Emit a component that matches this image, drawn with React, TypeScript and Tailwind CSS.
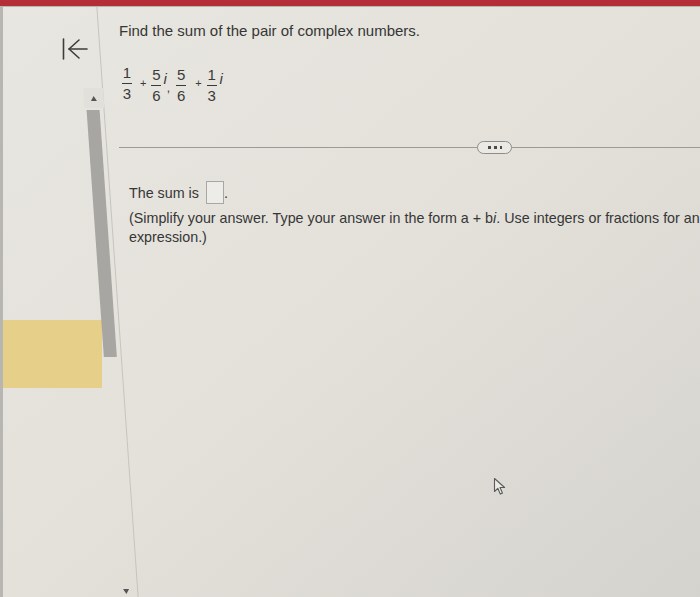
function Frac({ n, d }: { n: string; d: string }) {
  return (
    <span className="inline-flex flex-col items-center text-[15px] leading-[16px]">
      <span>{n}</span>
      <span className="my-[2px] h-px w-[10px] bg-[#3a3a3a]" />
      <span>{d}</span>
    </span>
  );
}

function BackIcon() {
  return (
    <svg width="26" height="22" viewBox="0 0 26 22" fill="none" stroke="#3d3d3d" strokeWidth="1.6" strokeLinecap="round" strokeLinejoin="round">
      <path d="M1.5 1v20" />
      <path d="M17 2l-10 9 10 9" />
      <path d="M7 11h18" />
    </svg>
  );
}

function Cursor() {
  return (
    <svg width="13" height="19" viewBox="0 0 13 19" className="absolute left-[493px] top-[477px]">
      <path d="M1.5 1.5v13l3.3-3.2 2.5 5.8 2.2-1-2.5-5.6h4.6z" fill="#eceae5" stroke="#5a5a5a" strokeWidth="1.1" strokeLinejoin="round" />
    </svg>
  );
}

export default function App() {
  return (
    <div className="relative h-[597px] w-[700px] overflow-hidden bg-gradient-to-br from-[#e8e6e0] via-[#e3e1da] to-[#d5d3cd] font-['Liberation_Sans',Arial,sans-serif] text-[#363636]">
      <div className="h-[6px] bg-[#b32e38]" />
      <div className="h-px bg-[#b9b6b0]" />
      <div className="flex h-[590px]">
        {/* left rail */}
        <aside className="flex w-[94px] flex-col border-l-[3px] border-[#b8b6b0]">
          <div className="ml-[59px] mt-[31px]">
            <BackIcon />
          </div>
          <div className="mt-[260px] h-[68px] w-[99px] bg-[#e6cf88]" />
        </aside>

        {/* scrollbar */}
        <div className="flex w-[24px] skew-x-[4deg] flex-col items-center border-r border-[#c6c4be]">
          <div className="ml-[4px] mt-[81px] flex h-[20px] w-[20px] items-center justify-center bg-[#e2e0db]">
            <span className="block h-0 w-0 border-x-[3px] border-b-[5px] border-x-transparent border-b-[#555]" />
          </div>
          <div className="ml-[6px] mt-[2px] h-[247px] w-[13px] self-start bg-[#a7a6a2]" />
          <div className="flex-1" />
          <span className="mb-[3px] block h-0 w-0 border-x-[3px] border-t-[5px] border-x-transparent border-t-[#555]" />
        </div>

        {/* content */}
        <main className="flex-1 overflow-hidden pl-[1px] pt-[15px]">
          <p className="whitespace-nowrap text-[15px] leading-[18px]">
            Find the sum of the pair of complex numbers.
          </p>

          <div className="ml-[3px] mt-[23px] flex items-center text-[#3a3a3a]">
            <Frac n="1" d="3" />
            <span className="ml-[8px] text-[11px] leading-none">+</span>
            <span className="ml-[5px]">
              <Frac n="5" d="6" />
            </span>
            <span className="mb-[10px] ml-[2px] text-[15px] italic leading-none">i</span>
            <span className="mt-[8px] text-[12px] leading-none">,</span>
            <span className="ml-[6px]">
              <Frac n="5" d="6" />
            </span>
            <span className="ml-[9px] text-[11px] leading-none">+</span>
            <span className="ml-[5px]">
              <Frac n="1" d="3" />
            </span>
            <span className="mb-[10px] ml-[3px] text-[15px] italic leading-none">i</span>
          </div>

          <div className="mt-[37px] flex items-center">
            <div className="h-px w-[358px] bg-[#9c9a96]" />
            <div className="flex h-[13px] w-[35px] items-center justify-center gap-[3px] rounded-full border border-[#8e8c88] bg-[#ebe9e4]">
              <span className="h-[3px] w-[3px] bg-[#4a4a4a]" />
              <span className="h-[3px] w-[3px] bg-[#4a4a4a]" />
              <span className="h-[3px] w-[2px] bg-[#4a4a4a]" />
            </div>
            <div className="h-px flex-1 bg-[#9c9a96]" />
          </div>

          <div className="pl-[10px] text-[14.3px]">
            <div className="mt-[27px] flex items-center">
              <span className="leading-[18px]">The sum is</span>
              <span className="ml-[7px] h-[23px] w-[18px] border border-[#a9a7a3] bg-[#eeece8]" />
              <span className="leading-[18px]">.</span>
            </div>
            <p className="mt-[5px] whitespace-nowrap leading-[19px]">
              (Simplify your answer. Type your answer in the form a + b<i>i</i>. Use integers or fractions for an
            </p>
            <p className="leading-[19px]">expression.)</p>
          </div>
        </main>
      </div>
      <Cursor />
    </div>
  );
}
